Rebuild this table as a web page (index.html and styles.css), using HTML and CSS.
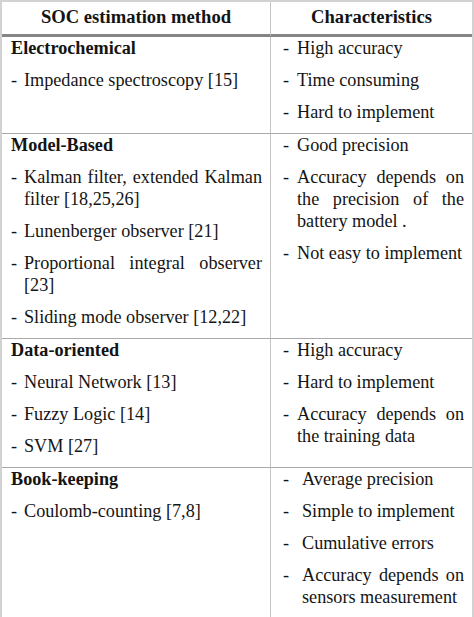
FILE: index.html
```html
<!DOCTYPE html>
<html>
<head>
<meta charset="utf-8">
<link rel="stylesheet" href="styles.css">
</head>
<body>
<div class="tbl">
  <div class="th th-left">SOC estimation method</div>
  <div class="th th-right">Characteristics</div>

  <div class="cell left">
    <p class="cat">Electrochemical</p>
    <p class="item"><span class="dash">-</span><span class="txt">Impedance spectroscopy [15]</span></p>
  </div>
  <div class="cell right">
    <p class="item"><span class="dash">-</span><span class="txt">High accuracy</span></p>
    <p class="item"><span class="dash">-</span><span class="txt">Time consuming</span></p>
    <p class="item"><span class="dash">-</span><span class="txt">Hard to implement</span></p>
  </div>

  <div class="cell left">
    <p class="cat">Model-Based</p>
    <p class="item"><span class="dash">-</span><span class="txt">Kalman filter, extended Kalman filter [18,25,26]</span></p>
    <p class="item"><span class="dash">-</span><span class="txt">Lunenberger observer [21]</span></p>
    <p class="item"><span class="dash">-</span><span class="txt">Proportional integral observer [23]</span></p>
    <p class="item"><span class="dash">-</span><span class="txt">Sliding mode observer [12,22]</span></p>
  </div>
  <div class="cell right">
    <p class="item"><span class="dash">-</span><span class="txt">Good precision</span></p>
    <p class="item"><span class="dash">-</span><span class="txt">Accuracy depends on the precision of the battery model .</span></p>
    <p class="item"><span class="dash">-</span><span class="txt">Not easy to implement</span></p>
  </div>

  <div class="cell left">
    <p class="cat">Data-oriented</p>
    <p class="item"><span class="dash">-</span><span class="txt">Neural Network [13]</span></p>
    <p class="item"><span class="dash">-</span><span class="txt">Fuzzy Logic [14]</span></p>
    <p class="item"><span class="dash">-</span><span class="txt">SVM [27]</span></p>
  </div>
  <div class="cell right">
    <p class="item"><span class="dash">-</span><span class="txt">High accuracy</span></p>
    <p class="item"><span class="dash">-</span><span class="txt">Hard to implement</span></p>
    <p class="item"><span class="dash">-</span><span class="txt">Accuracy depends on the training data</span></p>
  </div>

  <div class="cell left">
    <p class="cat">Book-keeping</p>
    <p class="item"><span class="dash">-</span><span class="txt">Coulomb-counting [7,8]</span></p>
  </div>
  <div class="cell right wide">
    <p class="item"><span class="dash">-</span><span class="txt">Average precision</span></p>
    <p class="item"><span class="dash">-</span><span class="txt">Simple to implement</span></p>
    <p class="item"><span class="dash">-</span><span class="txt">Cumulative errors</span></p>
    <p class="item"><span class="dash">-</span><span class="txt">Accuracy depends on sensors measurement</span></p>
  </div>
</div>
</body>
</html>
```
FILE: styles.css
```css
html, body {
  margin: 0;
  padding: 0;
  background: #ffffff;
}

body {
  font-family: "Liberation Serif", "Times New Roman", serif;
  font-size: 18.2px;
  line-height: 22px;
  color: #141414;
}

.tbl {
  width: 470px;
  display: grid;
  grid-template-columns: 268px 1fr;
  border-left: 2px solid #d2d2d2;
  border-right: 2px solid #d2d2d2;
  border-top: 2px solid #d2d2d2;
}

.th {
  height: 35px;
  box-sizing: border-box;
  padding-bottom: 2px;
  font-weight: bold;
  font-size: 18.6px;
  display: flex;
  align-items: center;
  justify-content: center;
  border-bottom: 3px solid #858585;
}

.th-right {
  border-left: 1px solid #c4c4c4;
}

.cell {
  border-top: 1px solid #a9a9a9;
}

.tbl > .cell:nth-child(3),
.tbl > .cell:nth-child(4) {
  border-top: none;
}

.left {
  padding-left: 9px;
  padding-right: 8px;
}

.right {
  border-left: 1px solid #c4c4c4;
  padding-left: 12px;
  padding-right: 8px;
}

p {
  margin: 0 0 10px 0;
}

.cat {
  font-weight: bold;
}

.item {
  display: flex;
}

.dash {
  flex: 0 0 13px;
}

.right .dash {
  flex-basis: 14px;
}

.right.wide .dash {
  flex-basis: 19px;
}

.txt {
  flex: 1 1 auto;
  min-width: 0;
  text-align: justify;
}
```
